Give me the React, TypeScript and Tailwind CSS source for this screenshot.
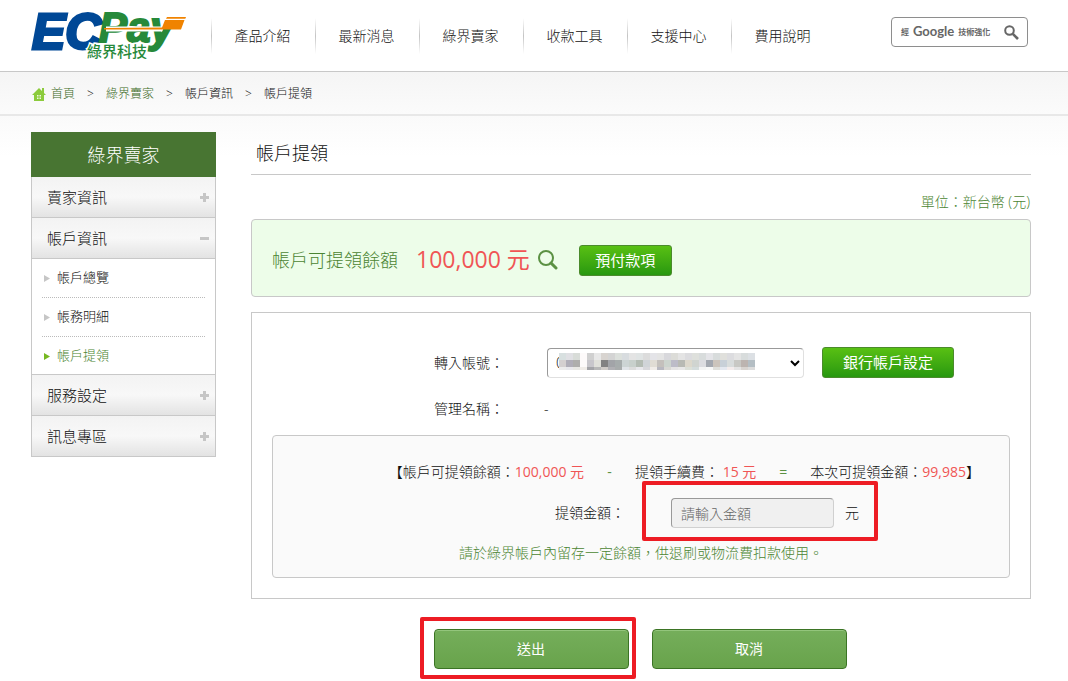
import type { ReactNode } from "react";
import clsx from "clsx";

const navItems = ["產品介紹", "最新消息", "綠界賣家", "收款工具", "支援中心", "費用說明"];

const accountLinks = [
  { label: "帳戶總覽", active: false },
  { label: "帳務明細", active: false },
  { label: "帳戶提領", active: true },
];

// one string per row of the masked account number, one colour per cell
const maskRows = [
  "d8e0e0 e0e0e4 d8dcd8 fdfafa d0d0d0 e8e8e8 d8d4d0 d4d4d4 dce0dc d8dcdf e4e4e4 e0e4e4 dcdcdc e4e4e8 e4e4e4 d8d8dc dcdcd8 e4e4e4 dcdcdf dee0dc d8dcdc e4e4e8 d8dcdc e0e0dc dcdcdf e4e4e4 d8dcdc dce0e4",
  "d4d0d0 b0aeb8 aeaeac fdfafa c8c6cb e0e0da 828282 a2a4a8 a6acac ccd4d4 c8d0cc b4bcb4 d0d4d8 e0dcd4 c4c0bc ccd4ce bcbcc8 b8bab4 dcd8cc d0d4d0 dcdce0 a4a8b0 ccc4bc c8d0d8 d8dcdc c8c8c4 bcb4b0 b4bec4",
  "ececec e8e8ec e8e8e4 f0ece8 a4a4a8 b8b8b8 d0ccc8 b0b0b4 a8acac e0e4e8 dcdcdc e8e8ec d8d8dc f0ece8 b8b8c0 d8d8d4 e4e4e4 e8e8e8 dce0d8 d4dcdc f4f4f4 f8f8f8 e0e0dc e4e8f0 f4ecec e4e4e4 d8d4d0 dcdcdc",
];

function Logo() {
  return (
    <svg className="overflow-visible" width="160" height="56" viewBox="0 0 160 56" role="img" aria-label="ECPay 綠界科技">
      <text x="2" y="39" fontFamily="Liberation Sans, sans-serif" fontSize="50" fontWeight="700" fontStyle="italic" fill="#004896" stroke="#004896" strokeWidth="3">
        EC
      </text>
      <text x="69" y="32" fontFamily="Liberation Sans, sans-serif" fontSize="42" fontWeight="700" fontStyle="italic" fill="#26893a" stroke="#26893a" strokeWidth="2">
        Pay
      </text>
      <path d="M76 16.500H134L132 21.500H76Z" fill="#fff" />
      <path d="M74 18L132 17.500L135 10H154.500L151 19.500H130L74 19.500Z" fill="#f08300" />
      <path d="M136 6H157L155.500 10H135Z" fill="#fff" />
      <path d="M137 7H156L155.300 8.800H136Z" fill="#f08300" />
      <text x="57" y="47" fontFamily="Noto Sans CJK TC, sans-serif" fontSize="15" fontWeight="500" fill="#26893a" stroke="#fff" strokeWidth="3" paintOrder="stroke">
        綠界科技
      </text>
    </svg>
  );
}

function HomeIcon() {
  return (
    <svg width="14" height="15" viewBox="0 0 14 15" aria-hidden="true">
      <path d="M7 1L0 8H2V14H12V8H14L12 6V1H10V4Z" fill="#8ccb3c" />
      <path d="M5 8H6.500V9.500H5ZM7.500 8H9V9.500H7.500ZM5 10.500H6.500V12H5ZM7.500 10.500H9V12H7.500Z" fill="#eefadf" />
    </svg>
  );
}

function Divider() {
  return <span className="h-9 w-px bg-linear-to-b from-white via-[#c4c4c4] to-white" />;
}

function MenuHeading({ label, open = false }: { label: string; open?: boolean }) {
  return (
    <button
      type="button"
      aria-expanded={open}
      className="flex h-[41px] w-full items-center justify-between border-b border-[#c8c8c8] bg-linear-to-b from-[#f3f3f3] via-[#f8f8f8] to-[#e3e3e3] pr-[6px] pl-[15px] text-[15px]"
    >
      {label}
      <svg width="9" height="9" viewBox="0 0 9 9" aria-hidden="true" fill="#c6c6c6">
        <path d="M0 3H9V6H0Z" />
        {!open && <path d="M3 0H6V9H3Z" />}
      </svg>
    </button>
  );
}

function Sidebar() {
  return (
    <aside className="w-[185px] shrink-0">
      <h2 className="flex h-[45px] items-center justify-center bg-[#487532] text-lg text-white">綠界賣家</h2>
      <div className="border-x border-[#c8c8c8] bg-white">
        <MenuHeading label="賣家資訊" />
        <MenuHeading label="帳戶資訊" open />
        <ul className="border-b border-[#c8c8c8] px-[10px]">
          {accountLinks.map((link) => (
            <li key={link.label} className="h-[39px] border-b border-dotted border-[#bbb] last:h-[37px] last:border-b-0">
              <a
                href="#"
                className={clsx(
                  "flex h-[38px] items-center gap-[7px] pl-[2px] text-[13px]",
                  link.active && "text-[#4b8532]",
                )}
              >
                <svg width="6" height="7" viewBox="0 0 6 7" aria-hidden="true">
                  <path d="M0 0L6 3.500L0 7Z" fill={link.active ? "#77b821" : "#c6c6c6"} />
                </svg>
                {link.label}
              </a>
            </li>
          ))}
        </ul>
        <MenuHeading label="服務設定" />
        <MenuHeading label="訊息專區" />
      </div>
    </aside>
  );
}

function GreenButton({ children, className }: { children: ReactNode; className?: string }) {
  return (
    <button
      type="button"
      className={clsx(
        "h-[31px] rounded-[3px] border border-[#4b8b2c] bg-linear-to-b from-[#58c013] to-[#279810] text-[15px] font-normal text-white",
        className,
      )}
    >
      {children}
    </button>
  );
}

function ActionButton({ children }: { children: ReactNode }) {
  return (
    <button
      type="button"
      className="h-10 w-[195px] rounded border border-[#3b7424] bg-linear-to-b from-[#75ae5b] to-[#68a34b] text-sm font-normal text-white shadow-[inset_0_1px_0_#93c57c]"
    >
      {children}
    </button>
  );
}

function MaskedNumber() {
  return (
    <div className="pointer-events-none absolute top-[5px] left-[12px] h-[17px] w-[196px]" aria-hidden="true">
      {maskRows.map((row, index) => (
        <div key={index} className={clsx("flex", index === 2 ? "h-[3px]" : "h-[7px]")}>
          {row.split(" ").map((color, cell) => (
            <span key={cell} className="w-[7px]" style={{ backgroundColor: `#${color}` }} />
          ))}
        </div>
      ))}
    </div>
  );
}

function Amount({ children }: { children: ReactNode }) {
  return <span className="font-normal text-[#f05555]">{children}</span>;
}

function Highlight({ className }: { className: string }) {
  return <span className={clsx("pointer-events-none absolute rounded-xs border-4 border-[#ed1c24]", className)} />;
}

export default function App() {
  return (
    <div className="bg-white font-['Open_Sans','Noto_Sans_CJK_TC',sans-serif] font-light text-[#111]" lang="zh-Hant">
      <header className="border-b border-[#c8c8c8]">
        <div className="mx-auto flex h-[71px] max-w-[1068px] items-start pr-10 pl-[30px]">
          <a href="#" className="mt-[10px] shrink-0">
            <Logo />
          </a>
          <nav className="mt-[18px] ml-[21px] flex">
            {navItems.map((item) => (
              <div key={item} className="flex w-[104px] items-center">
                <Divider />
                <a href="#" className="flex-1 pr-[2px] text-center text-sm">
                  {item}
                </a>
              </div>
            ))}
          </nav>
          <form className="mt-[17px] ml-auto flex h-[30px] w-[137px] items-center rounded border border-[#8e8e8e] pr-2 pl-[9px]">
            <button type="button" className="flex w-full items-center justify-between text-[#666]">
              <span className="flex items-center gap-1 text-[8px] font-bold">
                經
                <span className="font-['Lato',sans-serif] text-[13px] font-bold">Google</span>
                技術強化
              </span>
              <svg width="15" height="15" viewBox="0 0 15 15" fill="none" stroke="#666" aria-label="搜尋">
                <circle cx="5.500" cy="5.500" r="4.300" strokeWidth="2" />
                <path d="M8.800 8.800L14 14" strokeWidth="2.600" />
              </svg>
            </button>
          </form>
        </div>
      </header>

      <div className="border-b-2 border-[#e8e8e8] bg-linear-to-b from-[#f5f5f5] to-[#fbfbfb]">
        <nav className="mx-auto flex h-[42px] max-w-[1068px] items-center pt-[2px] pl-8 text-xs">
          <a href="#" className="flex items-center gap-[5px] text-[#3c6a26]">
            <HomeIcon />
            首頁
          </a>
          <span className="w-[31px] text-center">&gt;</span>
          <a href="#" className="text-[#3c6a26]">
            綠界賣家
          </a>
          <span className="w-[31px] text-center">&gt;</span>
          <a href="#">帳戶資訊</a>
          <span className="w-[31px] text-center">&gt;</span>
          <span>帳戶提領</span>
        </nav>
      </div>

      <div className="bg-linear-to-b from-[#fafafa] to-white to-[40px]">
        <div className="mx-auto flex max-w-[1068px] items-start gap-[35px] pt-4 pr-[37px] pl-[31px]">
          <Sidebar />
          <main className="min-w-0 flex-1">
            <h1 className="flex h-[43px] items-center border-b border-[#c8c8c8] pl-[5px] text-lg">帳戶提領</h1>
            <p className="mt-[15px] pr-px text-right text-sm leading-6 text-[#4b8532]">單位：新台幣 (元)</p>
            <section className="mt-[5px] flex h-[78px] items-center rounded border border-[#c8c8c8] bg-[#edfde9] pt-1 pl-5">
              <h2 className="text-lg text-[#4b8532]">帳戶可提領餘額</h2>
              <strong className="ml-[18px] pb-[2px] text-[23px] leading-8 font-normal text-[#f05555]">100,000 元</strong>
              <svg className="ml-2" width="20" height="20" viewBox="0 0 20 20" fill="none" stroke="#5b9143" aria-hidden="true">
                <circle cx="8" cy="8" r="7" strokeWidth="2" />
                <path d="M13 13L18 18" strokeWidth="3" strokeLinecap="round" />
              </svg>
              <GreenButton className="ml-[21px] w-[93px]">預付款項</GreenButton>
            </section>

            <form>
              <section className="mt-[15px] border border-[#c8c8c8] bg-white px-5 pt-[34px] pb-5 text-sm">
                <div className="flex items-center pl-[162px]">
                  <label htmlFor="account" className="w-[113px]">
                    轉入帳號：
                  </label>
                  <div className="relative">
                    <select
                      id="account"
                      className="h-[30px] w-[257px] rounded border border-[#e0e0e0] border-t-[#999] border-l-[#999] bg-white pl-1 text-sm text-black"
                    >
                      <option>0</option>
                    </select>
                    <MaskedNumber />
                  </div>
                  <GreenButton className="ml-[18px] w-[132px]">銀行帳戶設定</GreenButton>
                </div>
                <div className="mt-[21px] flex items-center pl-[162px] leading-5">
                  <span className="w-[110px]">管理名稱：</span>
                  <span>-</span>
                </div>

                <div className="mt-4 rounded border border-[#c8c8c8] bg-[#fafafa] pt-[26px] pb-[14px]">
                  <p className="flex justify-end pr-[29px] leading-5">
                    <span>
                      【帳戶可提領餘額：<Amount>100,000 元</Amount>
                    </span>
                    <span className="w-[51px] text-center font-normal text-[#5b9143]">-</span>
                    <span>
                      提領手續費： <Amount>15 元</Amount>
                    </span>
                    <span className="w-[54px] text-center font-normal text-[#5b9143]">=</span>
                    <span>
                      本次可提領金額：<Amount>99,985</Amount>】
                    </span>
                  </p>
                  <div className="mt-4 flex items-center pl-[282px]">
                    <label htmlFor="amount" className="w-[116px]">
                      提領金額：
                    </label>
                    <div className="relative flex items-center gap-[11px]">
                      <input
                        id="amount"
                        placeholder="請輸入金額"
                        className="h-[30px] w-[163px] rounded border border-[#d0d0d0] border-t-[#999] border-l-[#999] bg-[#f0f0f0] px-[9px] text-sm placeholder:text-[#656565]"
                      />
                      元
                      <Highlight className="-top-[17px] -left-[29px] h-[60px] w-[236px]" />
                    </div>
                  </div>
                  <p className="mt-[15px] text-center leading-5 text-[#4b8532]">
                    請於綠界帳戶內留存一定餘額，供退刷或物流費扣款使用。
                  </p>
                </div>
              </section>

              <div className="mt-[30px] flex justify-center gap-[23px] pr-[2px] pb-3">
                <div className="relative">
                  <ActionButton>送出</ActionButton>
                  <Highlight className="-top-3 -left-[14px] h-[62px] w-[216px]" />
                </div>
                <ActionButton>取消</ActionButton>
              </div>
            </form>
          </main>
        </div>
      </div>
    </div>
  );
}
